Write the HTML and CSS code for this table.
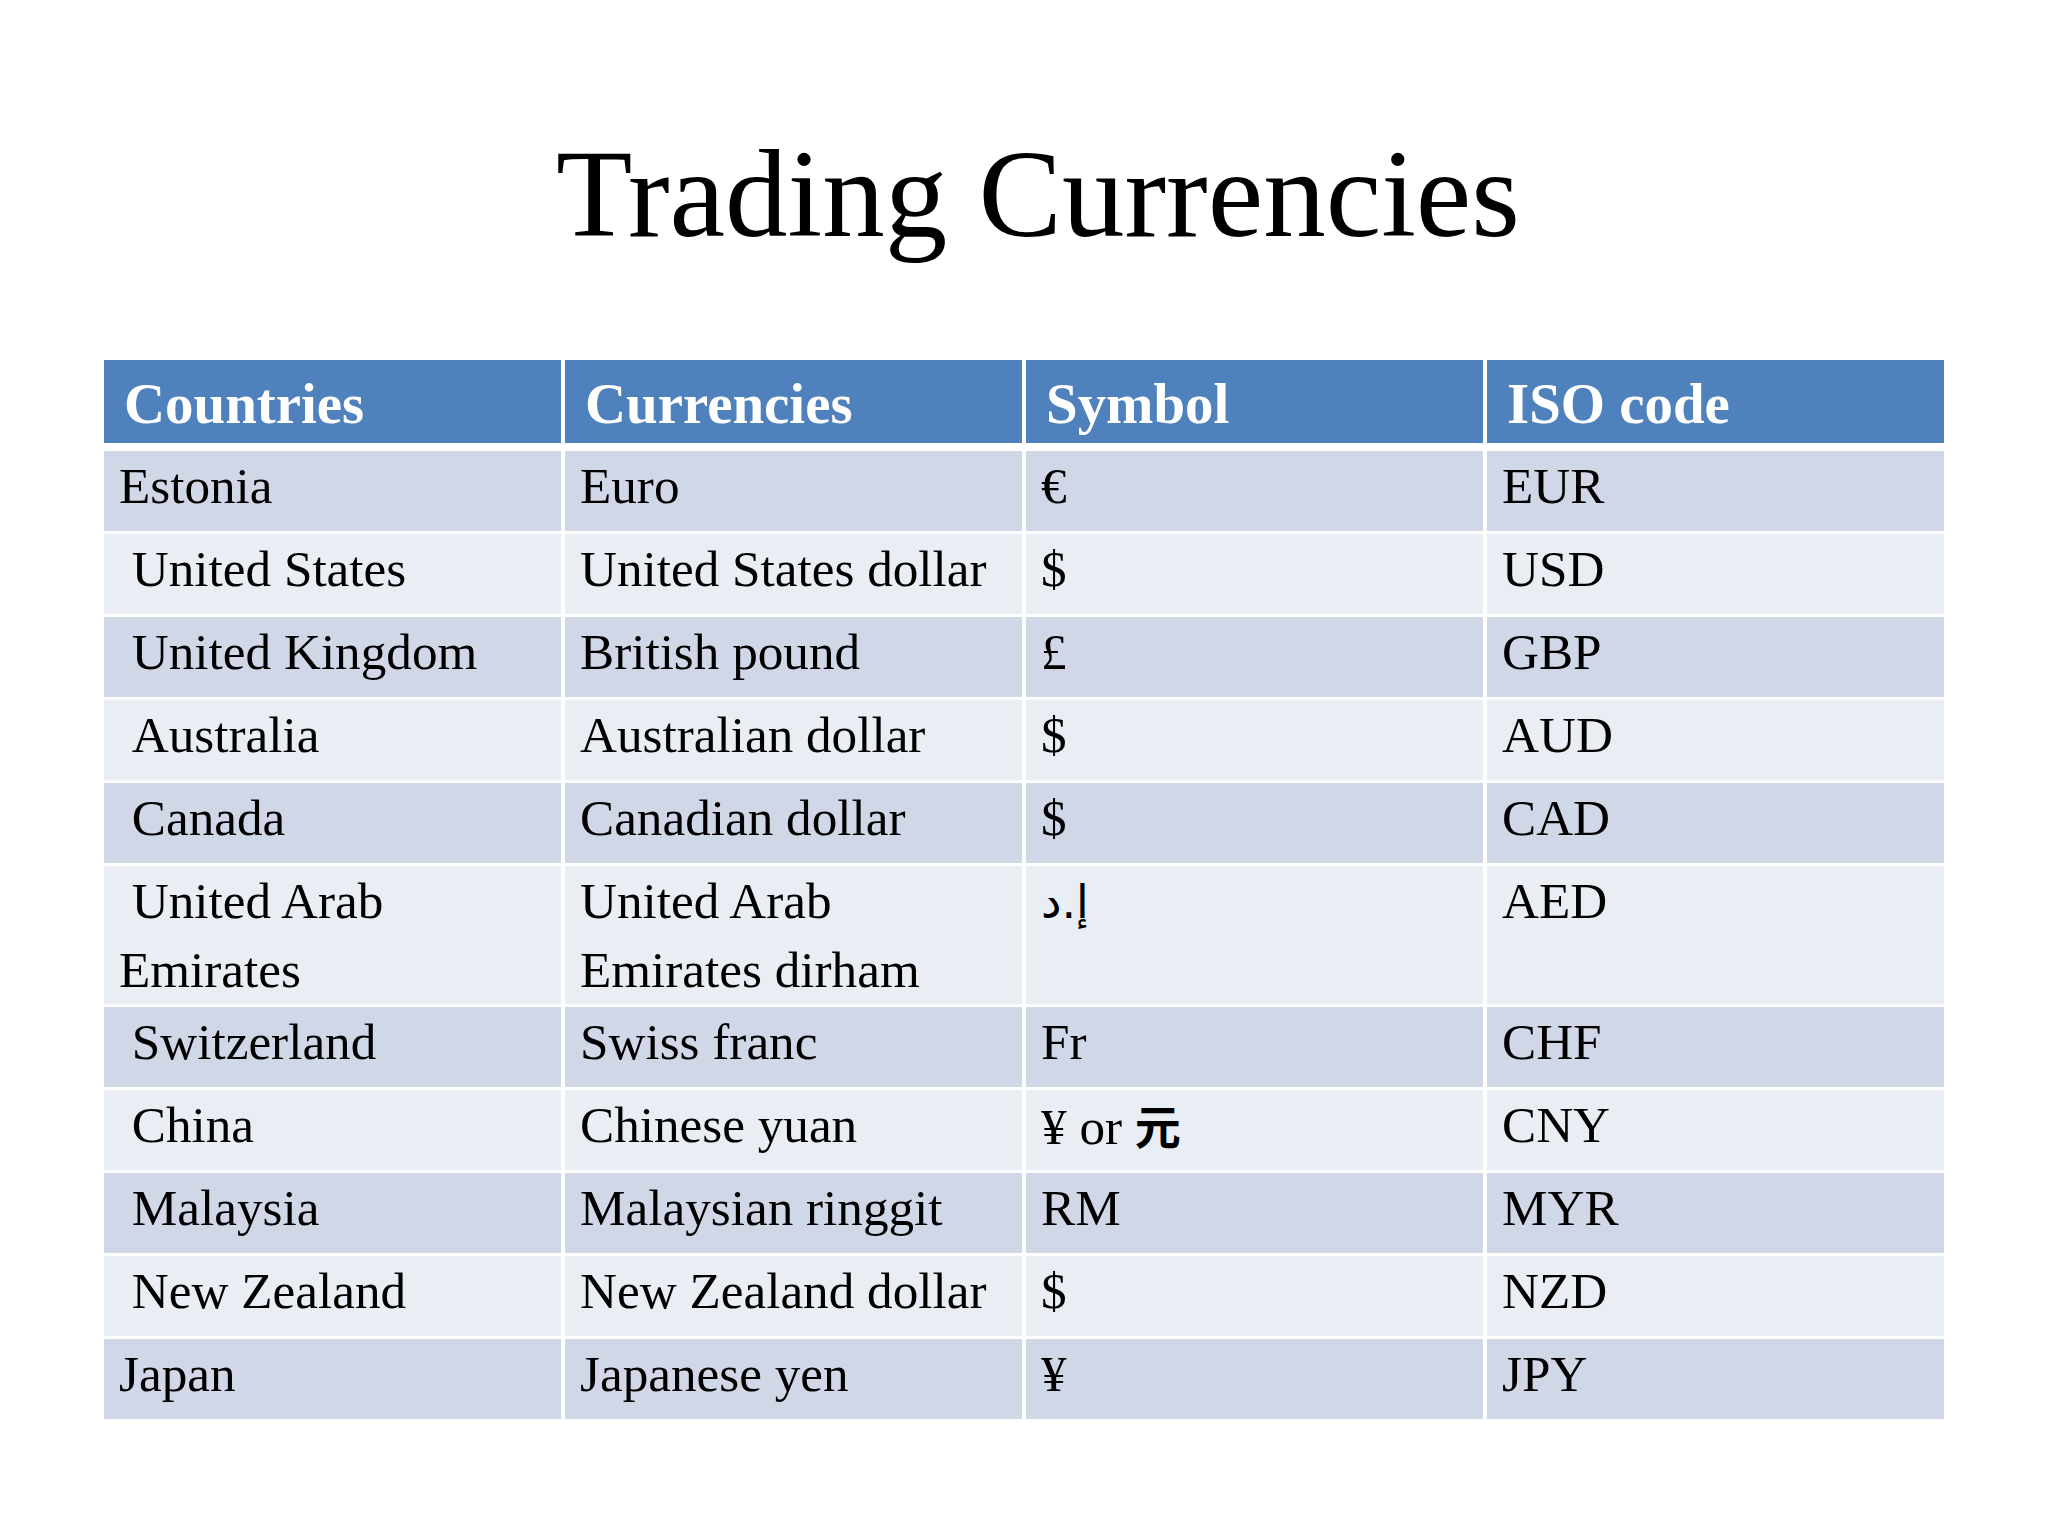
FILE: index.html
```html
<!DOCTYPE html>
<html lang="en">
<head>
<meta charset="utf-8">
<title>Trading Currencies</title>
<link rel="stylesheet" href="styles.css">
</head>
<body>
<main class="slide">
  <h1 class="title">Trading Currencies</h1>
  <div class="table">
    <div class="row head">
      <div class="cell">Countries</div>
      <div class="cell">Currencies</div>
      <div class="cell">Symbol</div>
      <div class="cell">ISO code</div>
    </div>
    <div class="row dark">
      <div class="cell">Estonia</div>
      <div class="cell">Euro</div>
      <div class="cell">€</div>
      <div class="cell">EUR</div>
    </div>
    <div class="row light">
      <div class="cell">&nbsp;United States</div>
      <div class="cell">United States dollar</div>
      <div class="cell">$</div>
      <div class="cell">USD</div>
    </div>
    <div class="row dark">
      <div class="cell">&nbsp;United Kingdom</div>
      <div class="cell">British pound</div>
      <div class="cell">£</div>
      <div class="cell">GBP</div>
    </div>
    <div class="row light">
      <div class="cell">&nbsp;Australia</div>
      <div class="cell">Australian dollar</div>
      <div class="cell">$</div>
      <div class="cell">AUD</div>
    </div>
    <div class="row dark">
      <div class="cell">&nbsp;Canada</div>
      <div class="cell">Canadian dollar</div>
      <div class="cell">$</div>
      <div class="cell">CAD</div>
    </div>
    <div class="row light">
      <div class="cell">&nbsp;United Arab<br>Emirates</div>
      <div class="cell">United Arab<br>Emirates dirham</div>
      <div class="cell"><span class="ar">إ.د</span></div>
      <div class="cell">AED</div>
    </div>
    <div class="row dark">
      <div class="cell">&nbsp;Switzerland</div>
      <div class="cell">Swiss franc</div>
      <div class="cell">Fr</div>
      <div class="cell">CHF</div>
    </div>
    <div class="row light">
      <div class="cell">&nbsp;China</div>
      <div class="cell">Chinese yuan</div>
      <div class="cell">¥ or <span class="cjk">元</span></div>
      <div class="cell">CNY</div>
    </div>
    <div class="row dark">
      <div class="cell">&nbsp;Malaysia</div>
      <div class="cell">Malaysian ringgit</div>
      <div class="cell">RM</div>
      <div class="cell">MYR</div>
    </div>
    <div class="row light">
      <div class="cell">&nbsp;New Zealand</div>
      <div class="cell">New Zealand dollar</div>
      <div class="cell">$</div>
      <div class="cell">NZD</div>
    </div>
    <div class="row dark">
      <div class="cell">Japan</div>
      <div class="cell">Japanese yen</div>
      <div class="cell">¥</div>
      <div class="cell">JPY</div>
    </div>
  </div>
</main>
</body>
</html>
```
FILE: styles.css
```css
html, body {
  margin: 0;
  padding: 0;
  background: #ffffff;
}

body {
  font-family: "Liberation Serif", "Noto Sans CJK SC", "DejaVu Sans", serif;
  color: #000000;
}

.slide {
  width: 2048px;
  height: 1536px;
  box-sizing: border-box;
  padding: 0 104px;
}

.title {
  margin: 0;
  padding: 122px 0 0 28px;
  font-size: 125px;
  font-weight: normal;
  line-height: 144px;
  text-align: center;
}

.table {
  margin-top: 94px;
  display: flex;
  flex-direction: column;
  gap: 3px;
}

.row {
  display: grid;
  grid-template-columns: repeat(4, 1fr);
  column-gap: 4px;
}

.cell {
  box-sizing: border-box;
  min-height: 80px;
  padding: 0 15px;
  font-size: 51.2px;
  line-height: 69px;
  white-space: nowrap;
}

.row.head {
  margin-bottom: 5px;
}

.row.head .cell {
  height: 83px;
  min-height: 83px;
  padding: 5px 20px 0 20px;
  background: #4f81bd;
  color: #ffffff;
  font-weight: bold;
  font-size: 56.9px;
  line-height: 78px;
}

.row.dark .cell {
  background: #d0d8e8;
}

.row.light .cell {
  background: #e9edf4;
}

.ar {
  font-family: "DejaVu Sans", sans-serif;
  font-size: 46px;
}

.cjk {
  font-family: "Noto Sans CJK SC", sans-serif;
  font-weight: bold;
  font-size: 46px;
}
```
